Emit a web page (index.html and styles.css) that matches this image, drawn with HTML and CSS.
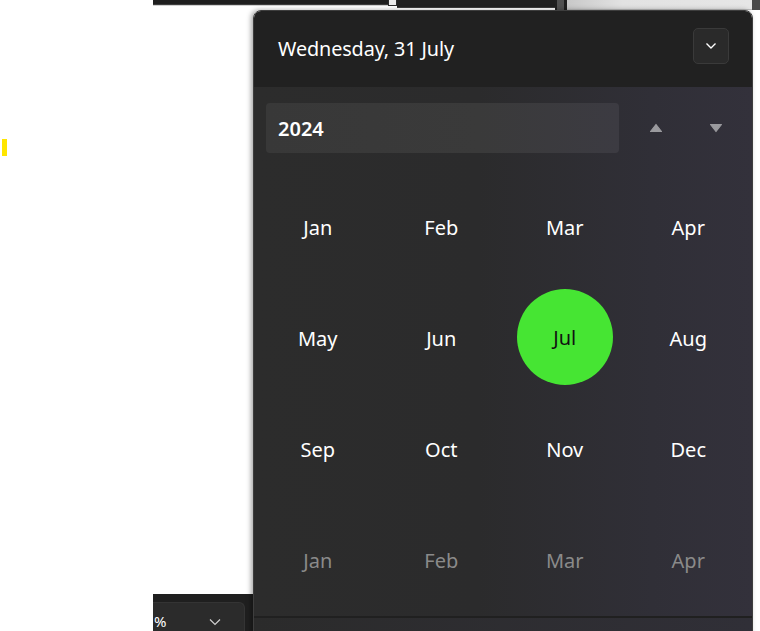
FILE: index.html
```html
<!DOCTYPE html>
<html>
<head>
<meta charset="utf-8">
<link rel="stylesheet" href="styles.css">
</head>
<body>
<div class="page">
  <div class="backdrop">
    <div class="topstrip">
      <div class="gap-left"></div>
      <div class="darkbar">
        <div class="darkbar-a"></div>
        <div class="knob"></div>
        <div class="darkbar-b"></div>
      </div>
      <div class="graybar"></div>
      <div class="lightbar"></div>
      <div class="edgebar"></div>
    </div>
    <div class="middle">
      <div class="mark"></div>
    </div>
    <div class="bottombar">
      <div class="combo">
        <span class="combo-text">%</span>
        <svg class="combo-chev" width="12" height="8" viewBox="0 0 12 8"><path d="M1 1.5 L6 6.5 L11 1.5" fill="none" stroke="#d0d0d0" stroke-width="1.2"/></svg>
      </div>
    </div>
  </div>

  <div class="flyout">
    <div class="header">
      <span class="title">Wednesday, 31 July</span>
      <button class="expand">
        <svg width="12" height="8" viewBox="0 0 12 8"><path d="M1.5 1.5 L6 6 L10.5 1.5" fill="none" stroke="#ffffff" stroke-width="1.4"/></svg>
      </button>
    </div>
    <div class="body">
      <div class="yearrow">
        <div class="yearbox">2024</div>
        <div class="arrows">
          <span class="arrow"><svg width="14" height="10" viewBox="0 0 14 10"><path d="M7 1.5 L12.5 8.5 L1.5 8.5 Z" fill="#9a9a9e" stroke="#9a9a9e" stroke-linejoin="round" stroke-width="1.2"/></svg></span>
          <span class="arrow"><svg width="14" height="10" viewBox="0 0 14 10"><path d="M1.5 1.5 L12.5 1.5 L7 8.5 Z" fill="#9a9a9e" stroke="#9a9a9e" stroke-linejoin="round" stroke-width="1.2"/></svg></span>
        </div>
      </div>
      <div class="months">
        <div class="cell"><span class="m">Jan</span></div>
        <div class="cell"><span class="m">Feb</span></div>
        <div class="cell"><span class="m">Mar</span></div>
        <div class="cell"><span class="m">Apr</span></div>
        <div class="cell"><span class="m">May</span></div>
        <div class="cell"><span class="m">Jun</span></div>
        <div class="cell"><span class="m sel">Jul</span></div>
        <div class="cell"><span class="m">Aug</span></div>
        <div class="cell"><span class="m">Sep</span></div>
        <div class="cell"><span class="m">Oct</span></div>
        <div class="cell"><span class="m">Nov</span></div>
        <div class="cell"><span class="m">Dec</span></div>
        <div class="cell"><span class="m dim">Jan</span></div>
        <div class="cell"><span class="m dim">Feb</span></div>
        <div class="cell"><span class="m dim">Mar</span></div>
        <div class="cell"><span class="m dim">Apr</span></div>
      </div>
      <div class="footer"></div>
    </div>
  </div>
</div>
</body>
</html>
```
FILE: styles.css
```css
html, body {
  margin: 0;
  padding: 0;
  background: #ffffff;
  overflow: hidden;
}
.page {
  position: relative;
  width: 760px;
  height: 631px;
  overflow: hidden;
  font-family: "Noto Sans", "Open Sans", sans-serif;
}
.backdrop {
  display: flex;
  flex-direction: column;
  height: 631px;
}
.topstrip {
  display: flex;
  height: 10px;
  flex: none;
}
.gap-left { width: 153px; }
.darkbar {
  width: 402px;
  display: flex;
}
.darkbar-a {
  width: 235px;
  height: 4px;
  background: #1e1e1e;
  border-bottom: 1px solid #3c3c3c;
  box-shadow: 0 1px 0 #d0d0d0;
}
.knob {
  width: 7px;
  height: 5px;
  background: #e8e8e8;
  border: 1px solid #2a2a2a;
  border-top: none;
}
.darkbar-b {
  flex: 1;
  height: 7px;
  background: #1e1e1e;
  border-bottom: 1px solid #3a3a3a;
}
.graybar {
  width: 12px;
  height: 10px;
  background: linear-gradient(90deg, #1f1f1f 0 2px, #505050 2px 9px, #1f1f1f 9px);
}
.lightbar {
  width: 185px;
  height: 9px;
  background: linear-gradient(90deg, #c8c8c8, #e2e2e2 30%, #e6e6e6);
  border-bottom: 1px solid #bdbdbd;
}
.edgebar {
  flex: 1;
  background: #4a4a4a;
}
.middle {
  flex: 1;
  padding-top: 129px;
}
.mark {
  margin-left: 2px;
  width: 5px;
  height: 17px;
  background: #ffe600;
}
.bottombar {
  margin-left: 153px;
  width: 100px;
  height: 37px;
  flex: none;
  background: #1f1f1f;
  display: flex;
  align-items: flex-end;
}
.combo {
  width: 92px;
  height: 29px;
  background: #2b2b2b;
  border-top: 1px solid #343434;
  border-right: 1px solid #343434;
  border-top-right-radius: 6px;
  display: flex;
  align-items: flex-end;
  justify-content: space-between;
  box-sizing: border-box;
}
.combo-text {
  color: #ffffff;
  font-size: 15px;
  line-height: 17px;
  margin-left: 1px;
  margin-bottom: 1px;
}
.combo-chev {
  margin-right: 23px;
  margin-bottom: 5px;
}

/* flyout */
.flyout {
  position: absolute;
  left: 253px;
  top: 10px;
  width: 500px;
  height: 640px;
  box-sizing: border-box;
  border: 1px solid #3e3e3e;
  border-radius: 8px 8px 0 0;
  overflow: hidden;
  box-shadow: -2px 0 5px rgba(0,0,0,0.35);
  display: flex;
  flex-direction: column;
}
.header {
  height: 76px;
  flex: none;
  background: #212121;
  display: flex;
  align-items: center;
  justify-content: space-between;
  padding: 0 23px 2px 24px;
  box-sizing: border-box;
}
.title {
  color: #ffffff;
  font-size: 19.8px;
  letter-spacing: -0.1px;
}
.expand {
  width: 36px;
  height: 36px;
  padding: 0;
  margin-bottom: 4px;
  border: 1px solid #3a3a3a;
  border-radius: 5px;
  background: #2a2a2a;
  display: flex;
  align-items: center;
  justify-content: center;
}
.body {
  flex: 1;
  background: linear-gradient(90deg, #2c2c2c 0%, #2b2b2c 45%, #302f37 80%, #33313b 100%);
  display: flex;
  flex-direction: column;
  padding: 16px 2px 0 2px;
}
.yearrow {
  display: flex;
  align-items: center;
  padding-left: 10px;
}
.yearbox {
  width: 353px;
  height: 50px;
  box-sizing: border-box;
  border-radius: 4px;
  background: linear-gradient(90deg, #383838, #3a3a3a 60%, #3c3b42);
  color: #ffffff;
  font-size: 20px;
  font-weight: 600;
  display: flex;
  align-items: center;
  padding-left: 12px;
}
.arrows {
  display: flex;
  margin-left: 30px;
  gap: 46px;
}
.arrow {
  width: 14px;
  height: 10px;
  display: flex;
}
.months {
  margin-top: 19px;
  display: grid;
  grid-template-columns: repeat(4, 123.5px);
  grid-template-rows: repeat(4, 111px);
}
.cell {
  display: flex;
  align-items: center;
  justify-content: center;
}
.m {
  color: #ffffff;
  font-size: 20px;
  width: 96px;
  height: 96px;
  border-radius: 50%;
  display: flex;
  align-items: center;
  justify-content: center;
}
.m.sel {
  background: #46e533;
  color: #111111;
  margin-top: -3px;
}
.m.dim {
  color: #8a8a8a;
}
.footer {
  border-top: 2px solid #202020;
  flex: 1;
  margin: 0 -2px;
  background: linear-gradient(90deg, #2b2b2b, #302f37);
}
```
